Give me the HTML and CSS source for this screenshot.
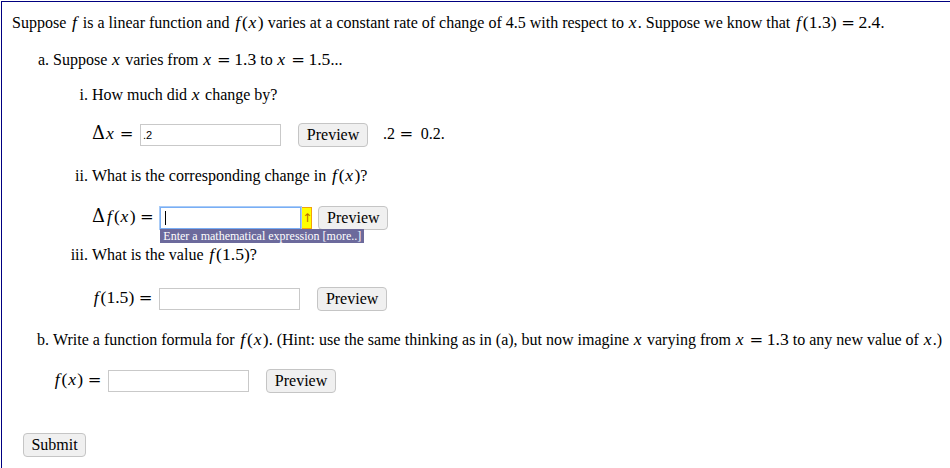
FILE: index.html
```html
<!DOCTYPE html>
<html>
<head>
<meta charset="utf-8">
<link rel="stylesheet" href="styles.css">
</head>
<body>
<div class="sheet">
  <div class="line stmt">Suppose <span class="math"><i class="f">f</i></span> is a linear function and <span class="math"><i class="f">f</i>(<i class="x">x</i>)</span> varies at a constant rate of change of 4.5 with respect to <span class="math"><i class="x">x</i></span>. Suppose we know that <span class="math"><i class="f">f</i>(1.3)<span class="eq">=</span>2.4</span>.</div>

  <div class="line item l1 g-a"><span class="mk">a.</span><span>Suppose <span class="math"><i class="x">x</i></span> varies from <span class="math"><i class="x">x</i><span class="eq">=</span>1.3</span> to <span class="math"><i class="x">x</i><span class="eq">=</span>1.5</span>...</span></div>

  <div class="line item l2 g-i"><span class="mk">i.</span><span>How much did <span class="math"><i class="x">x</i></span> change by?</span></div>
  <div class="wrow w2 g-r1">
    <span class="lbl math"><span class="delta">Δ</span><i class="x">x</i><span class="eq">=</span></span>
    <input class="ans" type="text" value=".2">
    <span class="spacer"></span>
    <button class="btn" type="button">Preview</button>
    <span class="result">.2<span class="math"><span class="eq">=</span></span> 0.2.</span>
  </div>

  <div class="line item l2 g-ii"><span class="mk">ii.</span><span>What is the corresponding change in <span class="math"><i class="f">f</i>(<i class="x">x</i>)</span>?</span></div>
  <div class="wrow w2 g-r2">
    <span class="lbl math"><span class="delta">Δ</span><i class="f">f</i>(<i class="x">x</i>)<span class="eq">=</span></span>
    <span class="field">
      <input class="ans focus" type="text" value="">
      <span class="caret"></span>
      <span class="tip">Enter a mathematical expression [more..]</span>
    </span>
    <span class="arrow">↑</span>
    <button class="btn" type="button">Preview</button>
  </div>

  <div class="line item l2 g-iii"><span class="mk">iii.</span><span>What is the value <span class="math"><i class="f">f</i>(1.5)</span>?</span></div>
  <div class="wrow w2 g-r3">
    <span class="lbl math"><i class="f">f</i>(1.5)<span class="eq">=</span></span>
    <input class="ans" type="text" value="">
    <span class="spacer"></span>
    <button class="btn" type="button">Preview</button>
  </div>

  <div class="line item l1 g-b"><span class="mk">b.</span><span>Write a function formula for <span class="math"><i class="f">f</i>(<i class="x">x</i>)</span>. (Hint: use the same thinking as in (a), but now imagine <span class="math"><i class="x">x</i></span> varying from <span class="math"><i class="x">x</i><span class="eq">=</span>1.3</span> to any new value of <span class="math"><i class="x">x</i></span>.)</span></div>
  <div class="wrow w1 g-r4">
    <span class="lbl math"><i class="f">f</i>(<i class="x">x</i>)<span class="eq">=</span></span>
    <input class="ans" type="text" value="">
    <span class="spacer"></span>
    <button class="btn" type="button">Preview</button>
  </div>

  <button class="btn submit" type="button">Submit</button>
</div>
</body>
</html>
```
FILE: styles.css
```css
html, body {
  margin: 0;
  padding: 0;
  background: #ffffff;
}
body {
  font-family: "Liberation Serif", "Times New Roman", serif;
  font-size: 16px;
  color: #000;
  overflow: hidden;
}
.sheet {
  margin: 1px 0 0 1px;
  border-top: 1px solid #000080;
  border-left: 1px solid #000080;
  height: 467px;
  box-sizing: border-box;
  padding-left: 10px;
  display: flex;
  flex-direction: column;
  align-items: flex-start;
}
.line {
  height: 24px;
  line-height: 24px;
  white-space: nowrap;
}
.math {
  font-size: 17.6px;
  line-height: 1;
}
.f {
  font-style: italic;
  padding: 0 0.11em 0 0.1em;
}
.x {
  font-style: italic;
  padding: 0 0.08em 0 0.04em;
}
.delta {
  font-family: "DejaVu Serif", serif;
  font-size: 1.02em;
  margin-right: 0.02em;
}
.eq {
  display: inline-block;
  width: 0.778em;
  text-align: center;
  margin: 0 0.278em;
  font-family: "DejaVu Serif", serif;
  font-size: 0.93em;
}
.item {
  display: flex;
}
.mk {
  text-align: right;
  margin-right: 4px;
}
.l1 .mk { width: 37px; }
.l2 .mk { width: 76px; }

.stmt { margin-top: 9px; }
.g-a { margin-top: 13px; }
.g-i { margin-top: 11px; }
.g-r1 { margin-top: 16px; }
.g-ii { margin-top: 17px; }
.g-r2 { margin-top: 18px; }
.g-iii { margin-top: 13px; }
.g-r3 { margin-top: 20px; }
.g-b { margin-top: 17px; }
.g-r4 { margin-top: 17px; }

.wrow {
  display: flex;
  align-items: center;
  height: 24px;
  white-space: nowrap;
}
.w2 { padding-left: 80px; }
.w1 { padding-left: 41px; }
.lbl {
  line-height: 20px;
  padding-bottom: 3px;
  padding-right: 3px;
}
.ans {
  width: 141px;
  height: 22px;
  box-sizing: border-box;
  border: 1px solid #c9c9c9;
  border-radius: 0;
  padding: 0 2px;
  margin: 0;
  font-family: "Liberation Sans", Arial, sans-serif;
  font-size: 11px;
  color: #000;
  background: #fff;
  outline: none;
}
.ans.focus {
  border-color: #79aef5;
  box-shadow: 0 0 0 1px #a8cbf7;
}
.spacer {
  width: 11px;
  height: 22px;
}
.field {
  position: relative;
  display: block;
  height: 22px;
}
.caret {
  position: absolute;
  left: 5px;
  top: 4px;
  width: 1px;
  height: 14px;
  background: #000;
}
.tip {
  position: absolute;
  left: 0;
  top: 22px;
  height: 14px;
  line-height: 14px;
  padding: 0 3px;
  background: #6c6a9c;
  color: #fff;
  font-size: 12px;
  white-space: nowrap;
}
.arrow {
  width: 11px;
  height: 22px;
  box-sizing: border-box;
  background: #ffff00;
  border: 1px solid #f2a30a;
  color: #b86a00;
  font-size: 12px;
  line-height: 20px;
  text-align: center;
  font-family: "DejaVu Sans", sans-serif;
}
.btn {
  width: 70px;
  height: 24px;
  box-sizing: border-box;
  margin: 0 0 0 6px;
  padding: 0;
  border: 1px solid #c5c5c5;
  border-radius: 4px;
  background: #f0f0f0;
  font-family: "Liberation Serif", "Times New Roman", serif;
  font-size: 16px;
  color: #000;
}
.result {
  margin-left: 15px;
  line-height: 20px;
  padding-bottom: 3px;
}
.submit {
  margin: 40px 0 0 11px;
  width: 63px;
}
```
